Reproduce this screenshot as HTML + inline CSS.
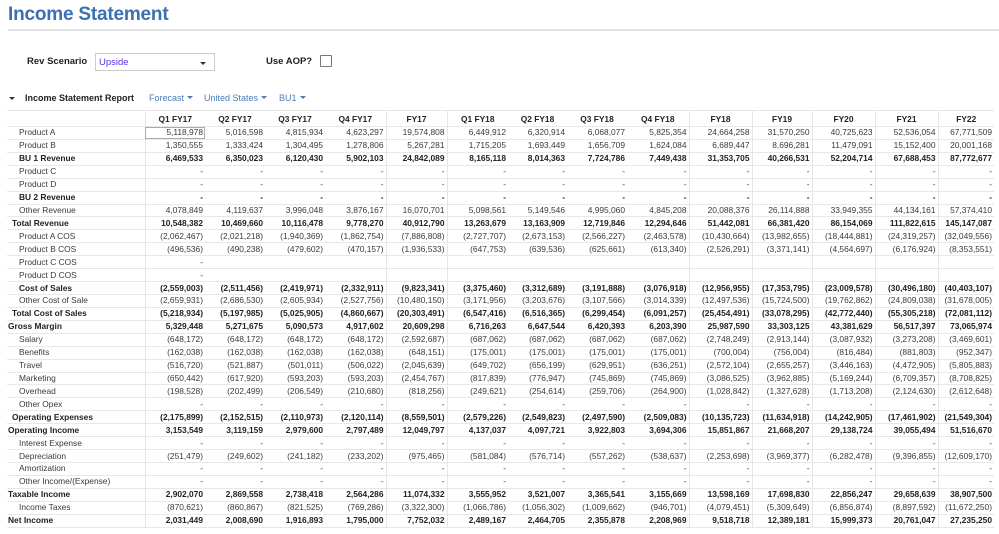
<!DOCTYPE html>
<html><head><meta charset="utf-8">
<style>
*{margin:0;padding:0;box-sizing:border-box}
body{width:999px;height:534px;overflow:hidden;background:#fff;font-family:"Liberation Sans",Arial,sans-serif;color:#222;position:relative}
.title{position:absolute;left:8px;top:4px;font-size:19px;font-weight:bold;color:#3b70b2;letter-spacing:-0.2px}
.hr{position:absolute;left:8px;right:0;top:29px;height:2px;background:#e2e2e2}
.lbl{position:absolute;font-size:9.5px;font-weight:bold;color:#222}
.sel{position:absolute;left:95px;top:53px;width:120px;height:18px;border:1px solid #ccc;font-size:9.5px;color:#5b2ee6;padding:3px 0 0 3px}
.sel:after{content:"";position:absolute;right:8px;top:8px;border-left:3px solid transparent;border-right:3px solid transparent;border-top:3px solid #333}
.cb{position:absolute;left:320px;top:55px;width:12px;height:12px;border:1px solid #777;border-radius:1px}
.rep{position:absolute;top:93px;font-size:9px}
.blue{color:#4b7cb9}
.tri{display:inline-block;border-left:3px solid transparent;border-right:3px solid transparent;border-top:3px solid #4b7cb9;vertical-align:middle;margin-left:3px;margin-top:-2px}
.ctri{position:absolute;left:9px;top:97px;width:0;height:0;border-left:3px solid transparent;border-right:3px solid transparent;border-top:3px solid #333}
table{position:absolute;left:7px;top:110px;border-collapse:collapse;table-layout:fixed;width:987px;font-size:8.4px}
th{height:16px;font-weight:bold;text-align:center;border-top:1px solid #e6e6e6;padding-top:1px}
td{height:12.93px;text-align:right;padding:0 2px 0 0;border-top:1px solid #e8e8e8;white-space:nowrap;line-height:11px;color:#3a3a3a}
td:first-child{text-align:left;padding-left:12px}
tr.b td{font-weight:bold;color:#222}
td.i0{padding-left:5px!important}
.vl{border-left:1px solid #e6e6e6}
tr.last td{border-bottom:1px solid #e8e8e8}
.box{outline:1px solid #aaa;outline-offset:-1px}
</style></head><body>
<div class="title">Income Statement</div>
<div class="hr"></div>
<div class="lbl" style="left:27px;top:56px">Rev Scenario</div>
<div class="sel">Upside</div>
<div class="lbl" style="left:266px;top:56px">Use AOP?</div>
<div class="cb"></div>
<div class="ctri"></div>
<div class="rep lbl" style="left:25px;font-size:9px">Income Statement Report</div>
<div class="rep blue" style="left:149px">Forecast<span class="tri"></span></div>
<div class="rep blue" style="left:204px">United States<span class="tri"></span></div>
<div class="rep blue" style="left:279px">BU1<span class="tri"></span></div>
<table>
<colgroup><col style="width:138px"><col style="width:60px"><col style="width:60px"><col style="width:60px"><col style="width:61px"><col style="width:61px"><col style="width:61px"><col style="width:59px"><col style="width:60px"><col style="width:62px"><col style="width:63px"><col style="width:60px"><col style="width:63px"><col style="width:63px"><col style="width:56px"></colgroup>
<tr><th></th><th class="vl">Q1 FY17</th><th>Q2 FY17</th><th>Q3 FY17</th><th>Q4 FY17</th><th class="vl">FY17</th><th class="vl">Q1 FY18</th><th>Q2 FY18</th><th>Q3 FY18</th><th>Q4 FY18</th><th class="vl">FY18</th><th class="vl">FY19</th><th class="vl">FY20</th><th class="vl">FY21</th><th class="vl">FY22</th></tr>
<tr><td>Product A</td><td class="vl box">5,118,978</td><td>5,016,598</td><td>4,815,934</td><td>4,623,297</td><td class="vl">19,574,808</td><td class="vl">6,449,912</td><td>6,320,914</td><td>6,068,077</td><td>5,825,354</td><td class="vl">24,664,258</td><td class="vl">31,570,250</td><td class="vl">40,725,623</td><td class="vl">52,536,054</td><td class="vl">67,771,509</td></tr>
<tr><td>Product B</td><td class="vl">1,350,555</td><td>1,333,424</td><td>1,304,495</td><td>1,278,806</td><td class="vl">5,267,281</td><td class="vl">1,715,205</td><td>1,693,449</td><td>1,656,709</td><td>1,624,084</td><td class="vl">6,689,447</td><td class="vl">8,696,281</td><td class="vl">11,479,091</td><td class="vl">15,152,400</td><td class="vl">20,001,168</td></tr>
<tr class="b"><td>BU 1 Revenue</td><td class="vl">6,469,533</td><td>6,350,023</td><td>6,120,430</td><td>5,902,103</td><td class="vl">24,842,089</td><td class="vl">8,165,118</td><td>8,014,363</td><td>7,724,786</td><td>7,449,438</td><td class="vl">31,353,705</td><td class="vl">40,266,531</td><td class="vl">52,204,714</td><td class="vl">67,688,453</td><td class="vl">87,772,677</td></tr>
<tr><td>Product C</td><td class="vl">-</td><td>-</td><td>-</td><td>-</td><td class="vl">-</td><td class="vl">-</td><td>-</td><td>-</td><td>-</td><td class="vl">-</td><td class="vl">-</td><td class="vl">-</td><td class="vl">-</td><td class="vl">-</td></tr>
<tr><td>Product D</td><td class="vl">-</td><td>-</td><td>-</td><td>-</td><td class="vl">-</td><td class="vl">-</td><td>-</td><td>-</td><td>-</td><td class="vl">-</td><td class="vl">-</td><td class="vl">-</td><td class="vl">-</td><td class="vl">-</td></tr>
<tr class="b"><td>BU 2 Revenue</td><td class="vl">-</td><td>-</td><td>-</td><td>-</td><td class="vl">-</td><td class="vl">-</td><td>-</td><td>-</td><td>-</td><td class="vl">-</td><td class="vl">-</td><td class="vl">-</td><td class="vl">-</td><td class="vl">-</td></tr>
<tr><td>Other Revenue</td><td class="vl">4,078,849</td><td>4,119,637</td><td>3,996,048</td><td>3,876,167</td><td class="vl">16,070,701</td><td class="vl">5,098,561</td><td>5,149,546</td><td>4,995,060</td><td>4,845,208</td><td class="vl">20,088,376</td><td class="vl">26,114,888</td><td class="vl">33,949,355</td><td class="vl">44,134,161</td><td class="vl">57,374,410</td></tr>
<tr class="b"><td class="i0">Total Revenue</td><td class="vl">10,548,382</td><td>10,469,660</td><td>10,116,478</td><td>9,778,270</td><td class="vl">40,912,790</td><td class="vl">13,263,679</td><td>13,163,909</td><td>12,719,846</td><td>12,294,646</td><td class="vl">51,442,081</td><td class="vl">66,381,420</td><td class="vl">86,154,069</td><td class="vl">111,822,615</td><td class="vl">145,147,087</td></tr>
<tr><td>Product A COS</td><td class="vl">(2,062,467)</td><td>(2,021,218)</td><td>(1,940,369)</td><td>(1,862,754)</td><td class="vl">(7,886,808)</td><td class="vl">(2,727,707)</td><td>(2,673,153)</td><td>(2,566,227)</td><td>(2,463,578)</td><td class="vl">(10,430,664)</td><td class="vl">(13,982,655)</td><td class="vl">(18,444,881)</td><td class="vl">(24,319,257)</td><td class="vl">(32,049,556)</td></tr>
<tr><td>Product B COS</td><td class="vl">(496,536)</td><td>(490,238)</td><td>(479,602)</td><td>(470,157)</td><td class="vl">(1,936,533)</td><td class="vl">(647,753)</td><td>(639,536)</td><td>(625,661)</td><td>(613,340)</td><td class="vl">(2,526,291)</td><td class="vl">(3,371,141)</td><td class="vl">(4,564,697)</td><td class="vl">(6,176,924)</td><td class="vl">(8,353,551)</td></tr>
<tr><td>Product C COS</td><td class="vl">-</td><td></td><td></td><td></td><td class="vl"></td><td class="vl"></td><td></td><td></td><td></td><td class="vl"></td><td class="vl"></td><td class="vl"></td><td class="vl"></td><td class="vl"></td></tr>
<tr><td>Product D COS</td><td class="vl">-</td><td></td><td></td><td></td><td class="vl"></td><td class="vl"></td><td></td><td></td><td></td><td class="vl"></td><td class="vl"></td><td class="vl"></td><td class="vl"></td><td class="vl"></td></tr>
<tr class="b"><td>Cost of Sales</td><td class="vl">(2,559,003)</td><td>(2,511,456)</td><td>(2,419,971)</td><td>(2,332,911)</td><td class="vl">(9,823,341)</td><td class="vl">(3,375,460)</td><td>(3,312,689)</td><td>(3,191,888)</td><td>(3,076,918)</td><td class="vl">(12,956,955)</td><td class="vl">(17,353,795)</td><td class="vl">(23,009,578)</td><td class="vl">(30,496,180)</td><td class="vl">(40,403,107)</td></tr>
<tr><td>Other Cost of Sale</td><td class="vl">(2,659,931)</td><td>(2,686,530)</td><td>(2,605,934)</td><td>(2,527,756)</td><td class="vl">(10,480,150)</td><td class="vl">(3,171,956)</td><td>(3,203,676)</td><td>(3,107,566)</td><td>(3,014,339)</td><td class="vl">(12,497,536)</td><td class="vl">(15,724,500)</td><td class="vl">(19,762,862)</td><td class="vl">(24,809,038)</td><td class="vl">(31,678,005)</td></tr>
<tr class="b"><td class="i0">Total Cost of Sales</td><td class="vl">(5,218,934)</td><td>(5,197,985)</td><td>(5,025,905)</td><td>(4,860,667)</td><td class="vl">(20,303,491)</td><td class="vl">(6,547,416)</td><td>(6,516,365)</td><td>(6,299,454)</td><td>(6,091,257)</td><td class="vl">(25,454,491)</td><td class="vl">(33,078,295)</td><td class="vl">(42,772,440)</td><td class="vl">(55,305,218)</td><td class="vl">(72,081,112)</td></tr>
<tr class="b"><td style="padding-left:1px">Gross Margin</td><td class="vl">5,329,448</td><td>5,271,675</td><td>5,090,573</td><td>4,917,602</td><td class="vl">20,609,298</td><td class="vl">6,716,263</td><td>6,647,544</td><td>6,420,393</td><td>6,203,390</td><td class="vl">25,987,590</td><td class="vl">33,303,125</td><td class="vl">43,381,629</td><td class="vl">56,517,397</td><td class="vl">73,065,974</td></tr>
<tr><td>Salary</td><td class="vl">(648,172)</td><td>(648,172)</td><td>(648,172)</td><td>(648,172)</td><td class="vl">(2,592,687)</td><td class="vl">(687,062)</td><td>(687,062)</td><td>(687,062)</td><td>(687,062)</td><td class="vl">(2,748,249)</td><td class="vl">(2,913,144)</td><td class="vl">(3,087,932)</td><td class="vl">(3,273,208)</td><td class="vl">(3,469,601)</td></tr>
<tr><td>Benefits</td><td class="vl">(162,038)</td><td>(162,038)</td><td>(162,038)</td><td>(162,038)</td><td class="vl">(648,151)</td><td class="vl">(175,001)</td><td>(175,001)</td><td>(175,001)</td><td>(175,001)</td><td class="vl">(700,004)</td><td class="vl">(756,004)</td><td class="vl">(816,484)</td><td class="vl">(881,803)</td><td class="vl">(952,347)</td></tr>
<tr><td>Travel</td><td class="vl">(516,720)</td><td>(521,887)</td><td>(501,011)</td><td>(506,022)</td><td class="vl">(2,045,639)</td><td class="vl">(649,702)</td><td>(656,199)</td><td>(629,951)</td><td>(636,251)</td><td class="vl">(2,572,104)</td><td class="vl">(2,655,257)</td><td class="vl">(3,446,163)</td><td class="vl">(4,472,905)</td><td class="vl">(5,805,883)</td></tr>
<tr><td>Marketing</td><td class="vl">(650,442)</td><td>(617,920)</td><td>(593,203)</td><td>(593,203)</td><td class="vl">(2,454,767)</td><td class="vl">(817,839)</td><td>(776,947)</td><td>(745,869)</td><td>(745,869)</td><td class="vl">(3,086,525)</td><td class="vl">(3,962,885)</td><td class="vl">(5,169,244)</td><td class="vl">(6,709,357)</td><td class="vl">(8,708,825)</td></tr>
<tr><td>Overhead</td><td class="vl">(198,528)</td><td>(202,499)</td><td>(206,549)</td><td>(210,680)</td><td class="vl">(818,256)</td><td class="vl">(249,621)</td><td>(254,614)</td><td>(259,706)</td><td>(264,900)</td><td class="vl">(1,028,842)</td><td class="vl">(1,327,628)</td><td class="vl">(1,713,208)</td><td class="vl">(2,124,630)</td><td class="vl">(2,612,648)</td></tr>
<tr><td>Other Opex</td><td class="vl">-</td><td>-</td><td>-</td><td>-</td><td class="vl">-</td><td class="vl">-</td><td>-</td><td>-</td><td>-</td><td class="vl">-</td><td class="vl">-</td><td class="vl">-</td><td class="vl">-</td><td class="vl">-</td></tr>
<tr class="b"><td class="i0">Operating Expenses</td><td class="vl">(2,175,899)</td><td>(2,152,515)</td><td>(2,110,973)</td><td>(2,120,114)</td><td class="vl">(8,559,501)</td><td class="vl">(2,579,226)</td><td>(2,549,823)</td><td>(2,497,590)</td><td>(2,509,083)</td><td class="vl">(10,135,723)</td><td class="vl">(11,634,918)</td><td class="vl">(14,242,905)</td><td class="vl">(17,461,902)</td><td class="vl">(21,549,304)</td></tr>
<tr class="b"><td style="padding-left:1px">Operating Income</td><td class="vl">3,153,549</td><td>3,119,159</td><td>2,979,600</td><td>2,797,489</td><td class="vl">12,049,797</td><td class="vl">4,137,037</td><td>4,097,721</td><td>3,922,803</td><td>3,694,306</td><td class="vl">15,851,867</td><td class="vl">21,668,207</td><td class="vl">29,138,724</td><td class="vl">39,055,494</td><td class="vl">51,516,670</td></tr>
<tr><td>Interest Expense</td><td class="vl">-</td><td>-</td><td>-</td><td>-</td><td class="vl">-</td><td class="vl">-</td><td>-</td><td>-</td><td>-</td><td class="vl">-</td><td class="vl">-</td><td class="vl">-</td><td class="vl">-</td><td class="vl">-</td></tr>
<tr><td>Depreciation</td><td class="vl">(251,479)</td><td>(249,602)</td><td>(241,182)</td><td>(233,202)</td><td class="vl">(975,465)</td><td class="vl">(581,084)</td><td>(576,714)</td><td>(557,262)</td><td>(538,637)</td><td class="vl">(2,253,698)</td><td class="vl">(3,969,377)</td><td class="vl">(6,282,478)</td><td class="vl">(9,396,855)</td><td class="vl">(12,609,170)</td></tr>
<tr><td>Amortization</td><td class="vl">-</td><td>-</td><td>-</td><td>-</td><td class="vl">-</td><td class="vl">-</td><td>-</td><td>-</td><td>-</td><td class="vl">-</td><td class="vl">-</td><td class="vl">-</td><td class="vl">-</td><td class="vl">-</td></tr>
<tr><td>Other Income/(Expense)</td><td class="vl">-</td><td>-</td><td>-</td><td>-</td><td class="vl">-</td><td class="vl">-</td><td>-</td><td>-</td><td>-</td><td class="vl">-</td><td class="vl">-</td><td class="vl">-</td><td class="vl">-</td><td class="vl">-</td></tr>
<tr class="b"><td style="padding-left:1px">Taxable Income</td><td class="vl">2,902,070</td><td>2,869,558</td><td>2,738,418</td><td>2,564,286</td><td class="vl">11,074,332</td><td class="vl">3,555,952</td><td>3,521,007</td><td>3,365,541</td><td>3,155,669</td><td class="vl">13,598,169</td><td class="vl">17,698,830</td><td class="vl">22,856,247</td><td class="vl">29,658,639</td><td class="vl">38,907,500</td></tr>
<tr><td>Income Taxes</td><td class="vl">(870,621)</td><td>(860,867)</td><td>(821,525)</td><td>(769,286)</td><td class="vl">(3,322,300)</td><td class="vl">(1,066,786)</td><td>(1,056,302)</td><td>(1,009,662)</td><td>(946,701)</td><td class="vl">(4,079,451)</td><td class="vl">(5,309,649)</td><td class="vl">(6,856,874)</td><td class="vl">(8,897,592)</td><td class="vl">(11,672,250)</td></tr>
<tr class="b last"><td style="padding-left:1px">Net Income</td><td class="vl">2,031,449</td><td>2,008,690</td><td>1,916,893</td><td>1,795,000</td><td class="vl">7,752,032</td><td class="vl">2,489,167</td><td>2,464,705</td><td>2,355,878</td><td>2,208,969</td><td class="vl">9,518,718</td><td class="vl">12,389,181</td><td class="vl">15,999,373</td><td class="vl">20,761,047</td><td class="vl">27,235,250</td></tr>
</table>
</body></html>
